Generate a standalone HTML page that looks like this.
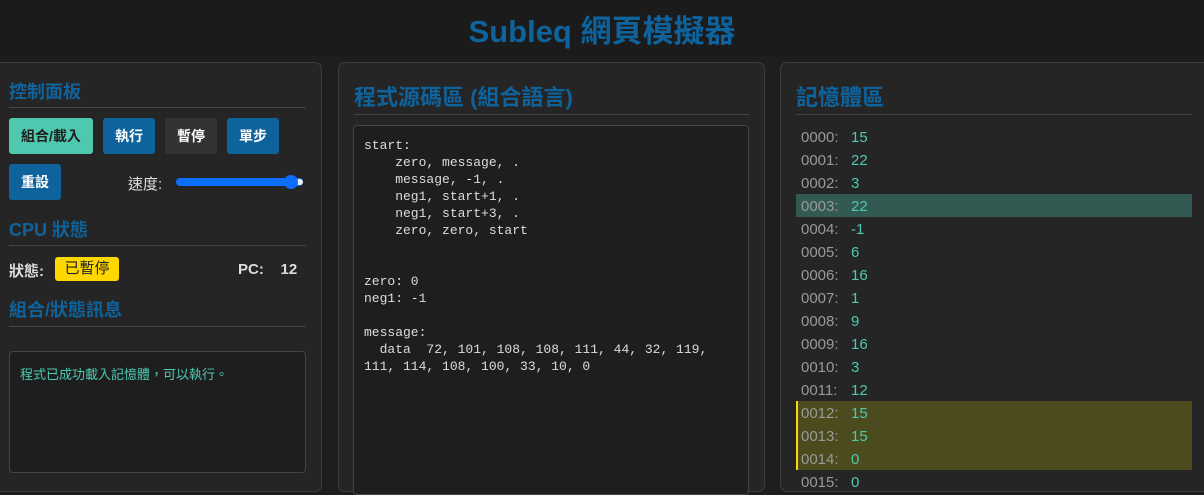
<!DOCTYPE html><html><head><meta charset="utf-8"><style>
*{box-sizing:border-box;margin:0;padding:0}
body{width:1204px;height:479px;overflow:hidden;background:#1e1e1e;font-family:"Liberation Sans","Noto Sans CJK TC",sans-serif;color:#ddd;position:relative}
h1{position:absolute;top:6px;left:0;width:1204px;text-align:center;color:#0e639c;font-size:31px;font-weight:bold}
.top{position:absolute;top:0;left:0;width:1204px;height:56px;background:#1b1b1b}
.panel{position:absolute;top:62px;height:430px;background:#252526;border:1px solid #3c3c3c;border-radius:7px}
h2{color:#0e639c;font-weight:bold;font-size:18px;border-bottom:1px solid #444;position:absolute}
.btn{position:absolute;height:36px;border-radius:3px;background:#0e639c;color:#fff;font-size:14px;font-weight:bold;text-align:center;line-height:36px}
.mem{position:absolute;left:796px;width:396px;height:23px;font-size:15px;line-height:25px}
.mem span{position:absolute;left:5px;color:#999}.mem b{position:absolute;left:55px;font-weight:normal;color:#4ec9b0}
.y{background:#4b4b1e;box-shadow:inset 2px 0 0 #ffd700}
pre{font-family:"Liberation Mono",monospace;font-size:13px;line-height:17px;color:#ddd}
</style></head><body>
<div class="top"></div>
<h1>Subleq 網頁模擬器</h1>
<div class="panel" style="left:-10px;width:332px"></div>
<h2 style="left:9px;top:78px;width:297px;height:30px">控制面板</h2>
<div class="btn" style="left:9px;top:118px;width:84px;background:#4ec9b0;color:#1e1e1e">組合/載入</div>
<div class="btn" style="left:103px;top:118px;width:52px">執行</div>
<div class="btn" style="left:165px;top:118px;width:52px;background:#333">暫停</div>
<div class="btn" style="left:227px;top:118px;width:52px">單步</div>
<div class="btn" style="left:9px;top:164px;width:52px">重設</div>
<div style="position:absolute;left:128px;top:173px;font-size:15px">速度:</div>
<div style="position:absolute;left:176px;top:178px;width:127px;height:8px;border-radius:4px;background:#0b6efd"></div>
<div style="position:absolute;left:296px;top:179px;width:7px;height:6px;background:#eee;border-radius:3px"></div>
<div style="position:absolute;left:284px;top:175px;width:14px;height:14px;border-radius:7px;background:#0b6efd"></div>
<h2 style="left:9px;top:216px;width:297px;height:30px">CPU 狀態</h2>
<div style="position:absolute;left:9px;top:260px;font-size:15px;font-weight:bold">狀態:</div>
<div style="position:absolute;left:55px;top:257px;width:64px;height:24px;background:#ffd700;color:#222;border-radius:3px;font-size:15px;text-align:center;line-height:24px">已暫停</div>
<div style="position:absolute;left:238px;top:261px;font-size:15px;font-weight:bold">PC:&nbsp;&nbsp;&nbsp;&nbsp;12</div>
<h2 style="left:9px;top:296px;width:297px;height:31px">組合/狀態訊息</h2>
<div style="position:absolute;left:9px;top:351px;width:297px;height:122px;border:1px solid #444;border-radius:4px;background:#1e1e1e;color:#4ec9b0;font-size:13px;padding:12px 10px">程式已成功載入記憶體，可以執行。</div>

<div class="panel" style="left:338px;width:427px"></div>
<h2 style="left:354px;top:80px;width:395px;height:35px;font-size:22px">程式源碼區 (組合語言)</h2>
<div style="position:absolute;left:353px;top:125px;width:396px;height:370px;border:1px solid #444;border-radius:4px;background:#1e1e1e;padding:11px 10px">
<pre>start:
    zero, message, .
    message, -1, .
    neg1, start+1, .
    neg1, start+3, .
    zero, zero, start


zero: 0
neg1: -1

message:
  data  72, 101, 108, 108, 111, 44, 32, 119,
111, 114, 108, 100, 33, 10, 0</pre></div>

<div class="panel" style="left:780px;width:440px"></div>
<h2 style="left:796px;top:80px;width:396px;height:35px;font-size:22px">記憶體區</h2>
<div class="mem" style="top:125px"><span>0000:</span><b>15</b></div>
<div class="mem" style="top:148px"><span>0001:</span><b>22</b></div>
<div class="mem" style="top:171px"><span>0002:</span><b>3</b></div>
<div class="mem" style="top:194px;background:#335a52"><span>0003:</span><b>22</b></div>
<div class="mem" style="top:217px"><span>0004:</span><b>-1</b></div>
<div class="mem" style="top:240px"><span>0005:</span><b>6</b></div>
<div class="mem" style="top:263px"><span>0006:</span><b>16</b></div>
<div class="mem" style="top:286px"><span>0007:</span><b>1</b></div>
<div class="mem" style="top:309px"><span>0008:</span><b>9</b></div>
<div class="mem" style="top:332px"><span>0009:</span><b>16</b></div>
<div class="mem" style="top:355px"><span>0010:</span><b>3</b></div>
<div class="mem" style="top:378px"><span>0011:</span><b>12</b></div>
<div class="mem y" style="top:401px"><span>0012:</span><b>15</b></div>
<div class="mem y" style="top:424px"><span>0013:</span><b>15</b></div>
<div class="mem y" style="top:447px"><span>0014:</span><b>0</b></div>
<div class="mem" style="top:470px"><span>0015:</span><b>0</b></div>
</body></html>
